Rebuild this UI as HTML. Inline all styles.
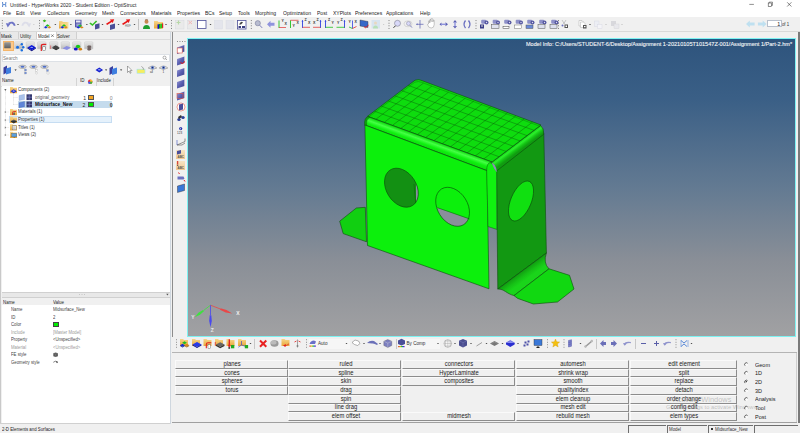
<!DOCTYPE html>
<html><head><meta charset="utf-8">
<style>
*{margin:0;padding:0;box-sizing:border-box}
html,body{width:800px;height:433px;overflow:hidden;background:#f0f0f0;font-family:"Liberation Sans",sans-serif;color:#222;position:relative}
.a{position:absolute}
.t{position:absolute;white-space:pre;line-height:1}
svg{position:absolute;left:0;top:0}
</style></head><body>
<div class="a" style="left:0px;top:0px;width:800px;height:17px;background:#ffffff;"></div>
<div class="a" style="left:0px;top:17px;width:800px;height:14px;background:#f0f0f0;"></div>
<div class="a" style="left:0px;top:31px;width:800px;height:1px;background:#d9d9d9;"></div>
<div class="t" style="left:10px;top:2.67px;font-size:5.0px;color:#1e1e1e;transform-origin:0 0;">Untitled - HyperWorks 2020 - Student Edition - OptiStruct</div>
<div class="t" style="left:2.8px;top:10.79px;font-size:5.8px;color:#1a1a1a;transform:scaleX(0.87);transform-origin:0 0;">File</div>
<div class="t" style="left:16px;top:10.79px;font-size:5.8px;color:#1a1a1a;transform:scaleX(0.87);transform-origin:0 0;">Edit</div>
<div class="t" style="left:30px;top:10.79px;font-size:5.8px;color:#1a1a1a;transform:scaleX(0.87);transform-origin:0 0;">View</div>
<div class="t" style="left:46.8px;top:10.79px;font-size:5.8px;color:#1a1a1a;transform:scaleX(0.87);transform-origin:0 0;">Collectors</div>
<div class="t" style="left:74.5px;top:10.79px;font-size:5.8px;color:#1a1a1a;transform:scaleX(0.87);transform-origin:0 0;">Geometry</div>
<div class="t" style="left:102px;top:10.79px;font-size:5.8px;color:#1a1a1a;transform:scaleX(0.87);transform-origin:0 0;">Mesh</div>
<div class="t" style="left:120px;top:10.79px;font-size:5.8px;color:#1a1a1a;transform:scaleX(0.87);transform-origin:0 0;">Connectors</div>
<div class="t" style="left:151px;top:10.79px;font-size:5.8px;color:#1a1a1a;transform:scaleX(0.87);transform-origin:0 0;">Materials</div>
<div class="t" style="left:177px;top:10.79px;font-size:5.8px;color:#1a1a1a;transform:scaleX(0.87);transform-origin:0 0;">Properties</div>
<div class="t" style="left:205px;top:10.79px;font-size:5.8px;color:#1a1a1a;transform:scaleX(0.87);transform-origin:0 0;">BCs</div>
<div class="t" style="left:219px;top:10.79px;font-size:5.8px;color:#1a1a1a;transform:scaleX(0.87);transform-origin:0 0;">Setup</div>
<div class="t" style="left:237.5px;top:10.79px;font-size:5.8px;color:#1a1a1a;transform:scaleX(0.87);transform-origin:0 0;">Tools</div>
<div class="t" style="left:254.5px;top:10.79px;font-size:5.8px;color:#1a1a1a;transform:scaleX(0.87);transform-origin:0 0;">Morphing</div>
<div class="t" style="left:282.5px;top:10.79px;font-size:5.8px;color:#1a1a1a;transform:scaleX(0.87);transform-origin:0 0;">Optimization</div>
<div class="t" style="left:317px;top:10.79px;font-size:5.8px;color:#1a1a1a;transform:scaleX(0.87);transform-origin:0 0;">Post</div>
<div class="t" style="left:332.5px;top:10.79px;font-size:5.8px;color:#1a1a1a;transform:scaleX(0.87);transform-origin:0 0;">XYPlots</div>
<div class="t" style="left:355px;top:10.79px;font-size:5.8px;color:#1a1a1a;transform:scaleX(0.87);transform-origin:0 0;">Preferences</div>
<div class="t" style="left:386px;top:10.79px;font-size:5.8px;color:#1a1a1a;transform:scaleX(0.87);transform-origin:0 0;">Applications</div>
<div class="t" style="left:419.5px;top:10.79px;font-size:5.8px;color:#1a1a1a;transform:scaleX(0.87);transform-origin:0 0;">Help</div>
<div class="a" style="left:0px;top:32px;width:170px;height:392px;background:#f0f0f0;"></div>
<div class="a" style="left:0px;top:32px;width:1px;height:392px;background:#c9c9c9;"></div>
<div class="a" style="left:1px;top:32px;width:17.5px;height:7px;background:#e9e9e9;border-right:1px solid #d0d0d0"></div>
<div class="a" style="left:18.5px;top:32px;width:18.5px;height:7px;background:#e9e9e9;border-right:1px solid #d0d0d0"></div>
<div class="a" style="left:37px;top:32px;width:19.5px;height:7.5px;background:#ffffff;border-right:1px solid #d0d0d0"></div>
<div class="a" style="left:56.5px;top:32px;width:20px;height:7px;background:#e9e9e9;border-right:1px solid #d0d0d0"></div>
<div class="a" style="left:1px;top:39px;width:169px;height:1px;background:#dcdcdc;"></div>
<div class="t" style="left:1px;top:33.71px;font-size:5.3px;color:#1a1a1a;transform:scaleX(0.85);transform-origin:0 0;">Mask</div>
<div class="t" style="left:20px;top:33.71px;font-size:5.3px;color:#1a1a1a;transform:scaleX(0.85);transform-origin:0 0;">Utility</div>
<div class="t" style="left:37.6px;top:33.71px;font-size:5.3px;color:#1a1a1a;transform:scaleX(0.8);transform-origin:0 0;">Model</div>
<div class="t" style="left:57px;top:33.71px;font-size:5.3px;color:#1a1a1a;transform:scaleX(0.85);transform-origin:0 0;">Solver</div>
<div class="a" style="left:1.5px;top:54px;width:168.5px;height:7.5px;background:#ffffff;border:0.7px solid #dde1e6"></div>
<div class="t" style="left:3px;top:55.59px;font-size:5.8px;color:#7a7a7a;transform:scaleX(0.8);transform-origin:0 0;">Search</div>
<div class="a" style="left:1px;top:78px;width:169px;height:7.5px;background:#f0f0f0;"></div>
<div class="a" style="left:1px;top:85.5px;width:169px;height:0.6px;background:#dadada;"></div>
<div class="a" style="left:76px;top:78px;width:0.6px;height:7.5px;background:#d4d4d4;"></div>
<div class="a" style="left:95.6px;top:78px;width:0.6px;height:7.5px;background:#d4d4d4;"></div>
<div class="a" style="left:113px;top:78px;width:0.6px;height:7.5px;background:#d4d4d4;"></div>
<div class="t" style="left:2.3px;top:79.45px;font-size:4.9px;color:#222;transform:scaleX(0.9);transform-origin:0 0;">Name</div>
<div class="t" style="left:80.3px;top:79.45px;font-size:4.9px;color:#222;transform:scaleX(0.9);transform-origin:0 0;">ID</div>
<div class="t" style="left:97px;top:79.45px;font-size:4.9px;color:#222;transform:scaleX(0.88);transform-origin:0 0;">Include</div>
<div class="a" style="left:1.5px;top:86px;width:168.5px;height:206px;background:#ffffff;"></div>
<div class="a" style="left:17.7px;top:101px;width:94.3px;height:7px;background:#c4dbed;"></div>
<div class="a" style="left:9.3px;top:116.2px;width:102.7px;height:7px;background:#e5f1fb;border:0.5px solid #c6ddf2"></div>
<div class="t" style="left:18.3px;top:88.25px;font-size:4.9px;color:#333;transform:scaleX(0.89);transform-origin:0 0;">Components (2)</div>
<div class="t" style="left:34.8px;top:96.34px;font-size:4.8px;color:#555;transform:scaleX(0.9);transform-origin:0 0;">original_geometry</div>
<div class="t" style="left:83.2px;top:96.08px;font-size:5.1px;color:#333;transform-origin:0 0;">1</div>
<div class="a" style="left:88.3px;top:94.5px;width:5.6px;height:5.6px;background:#f5a623;border:0.3px solid #555"></div>
<div class="t" style="left:109.8px;top:96.08px;font-size:5.1px;color:#888;transform-origin:0 0;">0</div>
<div class="t" style="left:35px;top:103.45px;font-size:4.9px;color:#111;transform:scaleX(0.97);transform-origin:0 0;font-weight:bold">Midsurface_New</div>
<div class="t" style="left:82.6px;top:103.28px;font-size:5.1px;color:#222;transform-origin:0 0;">2</div>
<div class="a" style="left:88.3px;top:101.5px;width:5.6px;height:5.6px;background:#00ee00;border:0.3px solid #555"></div>
<div class="t" style="left:109.8px;top:103.28px;font-size:5.1px;color:#333;transform-origin:0 0;font-weight:bold">0</div>
<div class="t" style="left:18.3px;top:110.35px;font-size:4.9px;color:#333;transform:scaleX(0.89);transform-origin:0 0;">Materials (1)</div>
<div class="t" style="left:18.3px;top:118.15px;font-size:4.9px;color:#333;transform:scaleX(0.89);transform-origin:0 0;">Properties (1)</div>
<div class="t" style="left:18.3px;top:125.75px;font-size:4.9px;color:#333;transform:scaleX(0.89);transform-origin:0 0;">Titles (1)</div>
<div class="t" style="left:18.3px;top:133.35px;font-size:4.9px;color:#333;transform:scaleX(0.89);transform-origin:0 0;">Views (2)</div>
<div class="a" style="left:1.5px;top:292px;width:168.5px;height:5.5px;background:#e8e8e8;border-top:0.5px solid #d0d0d0;border-bottom:0.5px solid #d0d0d0"></div>
<div class="a" style="left:1.5px;top:297.5px;width:168.5px;height:7.5px;background:#f0f0f0;"></div>
<div class="t" style="left:2.6px;top:300.85px;font-size:4.9px;color:#222;transform:scaleX(0.9);transform-origin:0 0;">Name</div>
<div class="t" style="left:52.8px;top:300.85px;font-size:4.9px;color:#222;transform:scaleX(0.9);transform-origin:0 0;">Value</div>
<div class="a" style="left:1.5px;top:305px;width:168.5px;height:118px;background:#ffffff;"></div>
<div class="t" style="left:10.6px;top:308.14px;font-size:4.8px;color:#444;transform:scaleX(0.89);transform-origin:0 0;">Name</div>
<div class="t" style="left:52.8px;top:308.14px;font-size:4.8px;color:#444;transform:scaleX(0.89);transform-origin:0 0;">Midsurface_New</div>
<div class="t" style="left:10.6px;top:315.69px;font-size:4.8px;color:#444;transform:scaleX(0.89);transform-origin:0 0;">ID</div>
<div class="t" style="left:52.8px;top:315.69px;font-size:4.8px;color:#444;transform:scaleX(0.89);transform-origin:0 0;">2</div>
<div class="t" style="left:10.6px;top:323.24px;font-size:4.8px;color:#444;transform:scaleX(0.89);transform-origin:0 0;">Color</div>
<div class="t" style="left:10.6px;top:330.79px;font-size:4.8px;color:#9a9a9a;transform:scaleX(0.89);transform-origin:0 0;">Include</div>
<div class="t" style="left:52.8px;top:330.79px;font-size:4.8px;color:#9a9a9a;transform:scaleX(0.89);transform-origin:0 0;">[Master Model]</div>
<div class="t" style="left:10.6px;top:338.34px;font-size:4.8px;color:#444;transform:scaleX(0.89);transform-origin:0 0;">Property</div>
<div class="t" style="left:52.8px;top:338.34px;font-size:4.8px;color:#444;transform:scaleX(0.89);transform-origin:0 0;">&lt;Unspecified&gt;</div>
<div class="t" style="left:10.6px;top:345.89px;font-size:4.8px;color:#9a9a9a;transform:scaleX(0.89);transform-origin:0 0;">Material</div>
<div class="t" style="left:52.8px;top:345.89px;font-size:4.8px;color:#9a9a9a;transform:scaleX(0.89);transform-origin:0 0;">&lt;Unspecified&gt;</div>
<div class="t" style="left:10.6px;top:353.44px;font-size:4.8px;color:#444;transform:scaleX(0.89);transform-origin:0 0;">FE style</div>
<div class="t" style="left:10.6px;top:360.99px;font-size:4.8px;color:#444;transform:scaleX(0.89);transform-origin:0 0;">Geometry style</div>
<div class="a" style="left:53px;top:321.5px;width:5.5px;height:5.5px;background:#00ee00;border:0.3px solid #444"></div>
<div class="a" style="left:0px;top:423px;width:171px;height:1px;background:#d0d0d0;"></div>
<div class="t" style="left:2px;top:427.74px;font-size:4.8px;color:#222;transform:scaleX(0.9);transform-origin:0 0;">2-D Elements and Surfaces</div>
<div class="a" style="left:169.9px;top:32px;width:1.4px;height:392px;background:#cfd7df;"></div>
<div class="a" style="left:171.9px;top:32px;width:1.3px;height:393px;background:#8c8c8c;"></div>
<div class="a" style="left:187px;top:38px;width:609px;height:299px;background:linear-gradient(#2e547d 0%,#3a5f86 20%,#637a92 50%,#8a8f97 75%,#a1a1a3 100%);border:1px solid #7ef2f2"></div>
<div class="a" style="left:188px;top:39px;width:607px;height:0.8px;background:#1f5886;"></div>
<div class="t" style="left:526px;top:42.19px;font-size:5.56px;color:#f4f6f8;transform-origin:0 0;-webkit-text-stroke:0.12px #e8ecf0">Model Info: C:/Users/STUDENT-6/Desktop/Assignment 1-20210105T101547Z-001/Assignment 1/Part-2.hm*</div>
<div class="a" style="left:798px;top:32px;width:1.6px;height:391px;background:#7a7a7a;"></div>
<div class="t" style="left:236.3px;top:311.07px;font-size:5px;color:#f4f4f4;transform-origin:0 0;font-weight:bold">X</div>
<div class="t" style="left:191.2px;top:314.57px;font-size:5px;color:#e8e8e8;transform-origin:0 0;font-weight:bold">Y</div>
<div class="t" style="left:210.8px;top:327.97px;font-size:5px;color:#e8e8e8;transform-origin:0 0;font-weight:bold">Z</div>
<div class="a" style="left:172.2px;top:337px;width:625px;height:15px;background:#f0f0f0;"></div>
<div class="a" style="left:172.2px;top:351.8px;width:625px;height:0.8px;background:#b4b4b4;"></div>
<div class="a" style="left:172.2px;top:352.7px;width:625px;height:0.6px;background:#fbfbfb;"></div>
<div class="a" style="left:172.2px;top:353px;width:625px;height:70px;background:#f0f0f0;"></div>
<div class="a" style="left:795.8px;top:353px;width:0.8px;height:69px;background:#cfcfcf;"></div>
<div class="a" style="left:172.2px;top:422px;width:625px;height:0.8px;background:#a0a0a0;"></div>
<div class="a" style="left:172.2px;top:423px;width:626px;height:10px;background:#f0f0f0;"></div>
<div class="a" style="left:174.5px;top:360.0px;width:113px;height:8.72px;background:#f0f0f0;border-top:0.6px solid #fafafa;border-left:0.6px solid #fafafa;border-right:1px solid #8c8c8c;border-bottom:1px solid #8c8c8c"></div>
<div class="t" style="left:131.8px;width:200px;text-align:center;top:360.88px;font-size:6.4px;color:#1a1a1a;transform:scaleX(0.91);transform-origin:50% 0;">planes</div>
<div class="a" style="left:174.5px;top:368.72px;width:113px;height:8.72px;background:#f0f0f0;border-top:0.6px solid #fafafa;border-left:0.6px solid #fafafa;border-right:1px solid #8c8c8c;border-bottom:1px solid #8c8c8c"></div>
<div class="t" style="left:131.8px;width:200px;text-align:center;top:369.60px;font-size:6.4px;color:#1a1a1a;transform:scaleX(0.91);transform-origin:50% 0;">cones</div>
<div class="a" style="left:174.5px;top:377.44px;width:113px;height:8.72px;background:#f0f0f0;border-top:0.6px solid #fafafa;border-left:0.6px solid #fafafa;border-right:1px solid #8c8c8c;border-bottom:1px solid #8c8c8c"></div>
<div class="t" style="left:131.8px;width:200px;text-align:center;top:378.32px;font-size:6.4px;color:#1a1a1a;transform:scaleX(0.91);transform-origin:50% 0;">spheres</div>
<div class="a" style="left:174.5px;top:386.16px;width:113px;height:8.72px;background:#f0f0f0;border-top:0.6px solid #fafafa;border-left:0.6px solid #fafafa;border-right:1px solid #8c8c8c;border-bottom:1px solid #8c8c8c"></div>
<div class="t" style="left:131.8px;width:200px;text-align:center;top:387.04px;font-size:6.4px;color:#1a1a1a;transform:scaleX(0.91);transform-origin:50% 0;">torus</div>
<div class="a" style="left:288.2px;top:360.0px;width:113px;height:8.72px;background:#f0f0f0;border-top:0.6px solid #fafafa;border-left:0.6px solid #fafafa;border-right:1px solid #8c8c8c;border-bottom:1px solid #8c8c8c"></div>
<div class="t" style="left:245.5px;width:200px;text-align:center;top:360.88px;font-size:6.4px;color:#1a1a1a;transform:scaleX(0.91);transform-origin:50% 0;">ruled</div>
<div class="a" style="left:288.2px;top:368.72px;width:113px;height:8.72px;background:#f0f0f0;border-top:0.6px solid #fafafa;border-left:0.6px solid #fafafa;border-right:1px solid #8c8c8c;border-bottom:1px solid #8c8c8c"></div>
<div class="t" style="left:245.5px;width:200px;text-align:center;top:369.60px;font-size:6.4px;color:#1a1a1a;transform:scaleX(0.91);transform-origin:50% 0;">spline</div>
<div class="a" style="left:288.2px;top:377.44px;width:113px;height:8.72px;background:#f0f0f0;border-top:0.6px solid #fafafa;border-left:0.6px solid #fafafa;border-right:1px solid #8c8c8c;border-bottom:1px solid #8c8c8c"></div>
<div class="t" style="left:245.5px;width:200px;text-align:center;top:378.32px;font-size:6.4px;color:#1a1a1a;transform:scaleX(0.91);transform-origin:50% 0;">skin</div>
<div class="a" style="left:288.2px;top:386.16px;width:113px;height:8.72px;background:#f0f0f0;border-top:0.6px solid #fafafa;border-left:0.6px solid #fafafa;border-right:1px solid #8c8c8c;border-bottom:1px solid #8c8c8c"></div>
<div class="t" style="left:245.5px;width:200px;text-align:center;top:387.04px;font-size:6.4px;color:#1a1a1a;transform:scaleX(0.91);transform-origin:50% 0;">drag</div>
<div class="a" style="left:288.2px;top:394.88px;width:113px;height:8.72px;background:#f0f0f0;border-top:0.6px solid #fafafa;border-left:0.6px solid #fafafa;border-right:1px solid #8c8c8c;border-bottom:1px solid #8c8c8c"></div>
<div class="t" style="left:245.5px;width:200px;text-align:center;top:395.76px;font-size:6.4px;color:#1a1a1a;transform:scaleX(0.91);transform-origin:50% 0;">spin</div>
<div class="a" style="left:288.2px;top:403.6px;width:113px;height:8.72px;background:#f0f0f0;border-top:0.6px solid #fafafa;border-left:0.6px solid #fafafa;border-right:1px solid #8c8c8c;border-bottom:1px solid #8c8c8c"></div>
<div class="t" style="left:245.5px;width:200px;text-align:center;top:404.48px;font-size:6.4px;color:#1a1a1a;transform:scaleX(0.91);transform-origin:50% 0;">line drag</div>
<div class="a" style="left:288.2px;top:412.32px;width:113px;height:8.72px;background:#f0f0f0;border-top:0.6px solid #fafafa;border-left:0.6px solid #fafafa;border-right:1px solid #8c8c8c;border-bottom:1px solid #8c8c8c"></div>
<div class="t" style="left:245.5px;width:200px;text-align:center;top:413.20px;font-size:6.4px;color:#1a1a1a;transform:scaleX(0.91);transform-origin:50% 0;">elem offset</div>
<div class="a" style="left:402px;top:360.0px;width:113px;height:8.72px;background:#f0f0f0;border-top:0.6px solid #fafafa;border-left:0.6px solid #fafafa;border-right:1px solid #8c8c8c;border-bottom:1px solid #8c8c8c"></div>
<div class="t" style="left:359.3px;width:200px;text-align:center;top:360.88px;font-size:6.4px;color:#1a1a1a;transform:scaleX(0.91);transform-origin:50% 0;">connectors</div>
<div class="a" style="left:402px;top:368.72px;width:113px;height:8.72px;background:#f0f0f0;border-top:0.6px solid #fafafa;border-left:0.6px solid #fafafa;border-right:1px solid #8c8c8c;border-bottom:1px solid #8c8c8c"></div>
<div class="t" style="left:359.3px;width:200px;text-align:center;top:369.60px;font-size:6.4px;color:#1a1a1a;transform:scaleX(0.91);transform-origin:50% 0;">HyperLaminate</div>
<div class="a" style="left:402px;top:377.44px;width:113px;height:8.72px;background:#f0f0f0;border-top:0.6px solid #fafafa;border-left:0.6px solid #fafafa;border-right:1px solid #8c8c8c;border-bottom:1px solid #8c8c8c"></div>
<div class="t" style="left:359.3px;width:200px;text-align:center;top:378.32px;font-size:6.4px;color:#1a1a1a;transform:scaleX(0.91);transform-origin:50% 0;">composites</div>
<div class="a" style="left:402px;top:412.32px;width:113px;height:8.72px;background:#f0f0f0;border-top:0.6px solid #fafafa;border-left:0.6px solid #fafafa;border-right:1px solid #8c8c8c;border-bottom:1px solid #8c8c8c"></div>
<div class="t" style="left:359.3px;width:200px;text-align:center;top:413.20px;font-size:6.4px;color:#1a1a1a;transform:scaleX(0.91);transform-origin:50% 0;">midmesh</div>
<div class="a" style="left:515.5px;top:360.0px;width:113px;height:8.72px;background:#f0f0f0;border-top:0.6px solid #fafafa;border-left:0.6px solid #fafafa;border-right:1px solid #8c8c8c;border-bottom:1px solid #8c8c8c"></div>
<div class="t" style="left:472.79999999999995px;width:200px;text-align:center;top:360.88px;font-size:6.4px;color:#1a1a1a;transform:scaleX(0.91);transform-origin:50% 0;">automesh</div>
<div class="a" style="left:515.5px;top:368.72px;width:113px;height:8.72px;background:#f0f0f0;border-top:0.6px solid #fafafa;border-left:0.6px solid #fafafa;border-right:1px solid #8c8c8c;border-bottom:1px solid #8c8c8c"></div>
<div class="t" style="left:472.79999999999995px;width:200px;text-align:center;top:369.60px;font-size:6.4px;color:#1a1a1a;transform:scaleX(0.91);transform-origin:50% 0;">shrink wrap</div>
<div class="a" style="left:515.5px;top:377.44px;width:113px;height:8.72px;background:#f0f0f0;border-top:0.6px solid #fafafa;border-left:0.6px solid #fafafa;border-right:1px solid #8c8c8c;border-bottom:1px solid #8c8c8c"></div>
<div class="t" style="left:472.79999999999995px;width:200px;text-align:center;top:378.32px;font-size:6.4px;color:#1a1a1a;transform:scaleX(0.91);transform-origin:50% 0;">smooth</div>
<div class="a" style="left:515.5px;top:386.16px;width:113px;height:8.72px;background:#f0f0f0;border-top:0.6px solid #fafafa;border-left:0.6px solid #fafafa;border-right:1px solid #8c8c8c;border-bottom:1px solid #8c8c8c"></div>
<div class="t" style="left:472.79999999999995px;width:200px;text-align:center;top:387.04px;font-size:6.4px;color:#1a1a1a;transform:scaleX(0.91);transform-origin:50% 0;">qualityindex</div>
<div class="a" style="left:515.5px;top:394.88px;width:113px;height:8.72px;background:#f0f0f0;border-top:0.6px solid #fafafa;border-left:0.6px solid #fafafa;border-right:1px solid #8c8c8c;border-bottom:1px solid #8c8c8c"></div>
<div class="t" style="left:472.79999999999995px;width:200px;text-align:center;top:395.76px;font-size:6.4px;color:#1a1a1a;transform:scaleX(0.91);transform-origin:50% 0;">elem cleanup</div>
<div class="a" style="left:515.5px;top:403.6px;width:113px;height:8.72px;background:#f0f0f0;border-top:0.6px solid #fafafa;border-left:0.6px solid #fafafa;border-right:1px solid #8c8c8c;border-bottom:1px solid #8c8c8c"></div>
<div class="t" style="left:472.79999999999995px;width:200px;text-align:center;top:404.48px;font-size:6.4px;color:#1a1a1a;transform:scaleX(0.91);transform-origin:50% 0;">mesh edit</div>
<div class="a" style="left:515.5px;top:412.32px;width:113px;height:8.72px;background:#f0f0f0;border-top:0.6px solid #fafafa;border-left:0.6px solid #fafafa;border-right:1px solid #8c8c8c;border-bottom:1px solid #8c8c8c"></div>
<div class="t" style="left:472.79999999999995px;width:200px;text-align:center;top:413.20px;font-size:6.4px;color:#1a1a1a;transform:scaleX(0.91);transform-origin:50% 0;">rebuild mesh</div>
<div class="a" style="left:629.5px;top:360.0px;width:107px;height:8.72px;background:#f0f0f0;border-top:0.6px solid #fafafa;border-left:0.6px solid #fafafa;border-right:1px solid #8c8c8c;border-bottom:1px solid #8c8c8c"></div>
<div class="t" style="left:583.8px;width:200px;text-align:center;top:360.88px;font-size:6.4px;color:#1a1a1a;transform:scaleX(0.91);transform-origin:50% 0;">edit element</div>
<div class="a" style="left:629.5px;top:368.72px;width:107px;height:8.72px;background:#f0f0f0;border-top:0.6px solid #fafafa;border-left:0.6px solid #fafafa;border-right:1px solid #8c8c8c;border-bottom:1px solid #8c8c8c"></div>
<div class="t" style="left:583.8px;width:200px;text-align:center;top:369.60px;font-size:6.4px;color:#1a1a1a;transform:scaleX(0.91);transform-origin:50% 0;">split</div>
<div class="a" style="left:629.5px;top:377.44px;width:107px;height:8.72px;background:#f0f0f0;border-top:0.6px solid #fafafa;border-left:0.6px solid #fafafa;border-right:1px solid #8c8c8c;border-bottom:1px solid #8c8c8c"></div>
<div class="t" style="left:583.8px;width:200px;text-align:center;top:378.32px;font-size:6.4px;color:#1a1a1a;transform:scaleX(0.91);transform-origin:50% 0;">replace</div>
<div class="a" style="left:629.5px;top:386.16px;width:107px;height:8.72px;background:#f0f0f0;border-top:0.6px solid #fafafa;border-left:0.6px solid #fafafa;border-right:1px solid #8c8c8c;border-bottom:1px solid #8c8c8c"></div>
<div class="t" style="left:583.8px;width:200px;text-align:center;top:387.04px;font-size:6.4px;color:#1a1a1a;transform:scaleX(0.91);transform-origin:50% 0;">detach</div>
<div class="a" style="left:629.5px;top:394.88px;width:107px;height:8.72px;background:#f0f0f0;border-top:0.6px solid #fafafa;border-left:0.6px solid #fafafa;border-right:1px solid #8c8c8c;border-bottom:1px solid #8c8c8c"></div>
<div class="t" style="left:583.8px;width:200px;text-align:center;top:395.76px;font-size:6.4px;color:#1a1a1a;transform:scaleX(0.91);transform-origin:50% 0;">order change</div>
<div class="a" style="left:629.5px;top:403.6px;width:107px;height:8.72px;background:#f0f0f0;border-top:0.6px solid #fafafa;border-left:0.6px solid #fafafa;border-right:1px solid #8c8c8c;border-bottom:1px solid #8c8c8c"></div>
<div class="t" style="left:583.8px;width:200px;text-align:center;top:404.48px;font-size:6.4px;color:#1a1a1a;transform:scaleX(0.91);transform-origin:50% 0;">config edit</div>
<div class="a" style="left:629.5px;top:412.32px;width:107px;height:8.72px;background:#f0f0f0;border-top:0.6px solid #fafafa;border-left:0.6px solid #fafafa;border-right:1px solid #8c8c8c;border-bottom:1px solid #8c8c8c"></div>
<div class="t" style="left:583.8px;width:200px;text-align:center;top:413.20px;font-size:6.4px;color:#1a1a1a;transform:scaleX(0.91);transform-origin:50% 0;">elem types</div>
<div class="t" style="left:754.7px;top:361.52px;font-size:6.0px;color:#1a1a1a;transform:scaleX(0.92);transform-origin:0 0;">Geom</div>
<div class="t" style="left:754.7px;top:370.24px;font-size:6.0px;color:#1a1a1a;transform:scaleX(0.92);transform-origin:0 0;">1D</div>
<div class="t" style="left:754.7px;top:378.96px;font-size:6.0px;color:#1a1a1a;transform:scaleX(0.92);transform-origin:0 0;">2D</div>
<div class="t" style="left:754.7px;top:387.68px;font-size:6.0px;color:#1a1a1a;transform:scaleX(0.92);transform-origin:0 0;">3D</div>
<div class="t" style="left:754.7px;top:396.40px;font-size:6.0px;color:#1a1a1a;transform:scaleX(0.92);transform-origin:0 0;">Analysis</div>
<div class="t" style="left:754.7px;top:405.12px;font-size:6.0px;color:#1a1a1a;transform:scaleX(0.92);transform-origin:0 0;">Tool</div>
<div class="t" style="left:754.7px;top:413.84px;font-size:6.0px;color:#1a1a1a;transform:scaleX(0.92);transform-origin:0 0;">Post</div>
<div class="t" style="left:673px;top:395.64px;font-size:7.4px;color:rgba(125,125,125,0.42);transform-origin:0 0;">Activate Windows</div>
<div class="t" style="left:666px;top:405.36px;font-size:5.83px;color:rgba(125,125,125,0.42);transform-origin:0 0;">Go to Settings to activate Windows.</div>
<div class="a" style="left:628px;top:425px;width:38px;height:8px;background:#f0f0f0;border-left:1px solid #6e6e6e;border-top:1px solid #6e6e6e"></div>
<div class="a" style="left:667px;top:425px;width:40px;height:8px;background:#f0f0f0;border-left:1px solid #6e6e6e;border-top:1px solid #6e6e6e"></div>
<div class="a" style="left:708px;top:425px;width:45px;height:8px;background:#f0f0f0;border-left:1px solid #6e6e6e;border-top:1px solid #6e6e6e"></div>
<div class="a" style="left:754px;top:425px;width:44px;height:8px;background:#f0f0f0;border-left:1px solid #6e6e6e;border-top:1px solid #6e6e6e"></div>
<div class="t" style="left:669px;top:427.65px;font-size:4.9px;color:#333;transform:scaleX(0.9);transform-origin:0 0;">Model</div>
<div class="a" style="left:710.5px;top:427.8px;width:2.6px;height:2.6px;background:#00cc00;border:0.3px solid #333"></div>
<div class="t" style="left:715px;top:427.65px;font-size:4.9px;color:#333;transform:scaleX(0.9);transform-origin:0 0;">Midsurface_New</div>
<div class="a" style="left:2.5px;top:40.8px;width:11px;height:10.6px;background:#fcc98a;border:0.5px solid #f4b56a"></div>
<div class="t" style="left:150px;top:71.26px;font-size:3px;color:#333;transform-origin:0 0;">all</div>
<div class="t" style="left:162.5px;top:71.26px;font-size:3px;color:#333;transform-origin:0 0;">1</div>
<div class="t" style="left:125px;top:26.40px;font-size:2.6px;color:#666;transform-origin:0 0;">HWF</div>
<div class="a" style="left:138.3px;top:19px;width:0.6px;height:11px;background:#c4c4c4;"></div>
<div class="t" style="left:281.5px;top:20.45px;font-size:3.6px;color:#333;transform-origin:0 0;font-weight:bold">Y</div>
<div class="t" style="left:284.5px;top:23.45px;font-size:3.6px;color:#333;transform-origin:0 0;font-weight:bold">X</div>
<div class="t" style="left:296.5px;top:21.95px;font-size:3.6px;color:#333;transform-origin:0 0;font-weight:bold">X</div>
<div class="t" style="left:292.5px;top:25.45px;font-size:3.6px;color:#333;transform-origin:0 0;font-weight:bold">Y</div>
<div class="t" style="left:304.5px;top:18.95px;font-size:3.6px;color:#333;transform-origin:0 0;font-weight:bold">Z</div>
<div class="t" style="left:308px;top:22.45px;font-size:3.6px;color:#333;transform-origin:0 0;font-weight:bold">X</div>
<div class="t" style="left:313px;top:22.45px;font-size:3.6px;color:#333;transform-origin:0 0;font-weight:bold">X</div>
<div class="t" style="left:316.5px;top:18.95px;font-size:3.6px;color:#333;transform-origin:0 0;font-weight:bold">Z</div>
<div class="t" style="left:328px;top:18.95px;font-size:3.6px;color:#333;transform-origin:0 0;font-weight:bold">Z</div>
<div class="t" style="left:331.5px;top:22.45px;font-size:3.6px;color:#333;transform-origin:0 0;font-weight:bold">Y</div>
<div class="t" style="left:337px;top:22.45px;font-size:3.6px;color:#333;transform-origin:0 0;font-weight:bold">Y</div>
<div class="t" style="left:340.5px;top:18.95px;font-size:3.6px;color:#333;transform-origin:0 0;font-weight:bold">Z</div>
<div class="t" style="left:348.5px;top:20.95px;font-size:3.6px;color:#333;transform-origin:0 0;font-weight:bold">Y</div>
<div class="t" style="left:354.5px;top:20.95px;font-size:3.6px;color:#333;transform-origin:0 0;font-weight:bold">X</div>
<div class="a" style="left:767.4px;top:20.3px;width:14.2px;height:7.1px;background:#ffffff;border:0.5px solid #b8c0cc"></div>
<div class="t" style="left:580.2px;width:200px;text-align:right;top:22.03px;font-size:5.4px;color:#222;transform-origin:100% 0;">1</div>
<div class="t" style="left:782.2px;top:22.37px;font-size:5.0px;color:#333;transform:scaleX(0.85);transform-origin:0 0;">of 1</div>
<div class="a" style="left:254.3px;top:339px;width:0.6px;height:10px;background:#c8c8c8;"></div>
<div class="a" style="left:308.5px;top:338.5px;width:41px;height:10px;background:#f6f6f6;"></div>
<div class="t" style="left:318px;top:341.81px;font-size:4.6px;color:#333;transform-origin:0 0;">Auto</div>
<div class="a" style="left:395.8px;top:339px;width:0.6px;height:10px;background:#c8c8c8;"></div>
<div class="a" style="left:397.5px;top:338.5px;width:42px;height:10px;background:#f6f6f6;"></div>
<div class="t" style="left:406.5px;top:341.81px;font-size:4.6px;color:#333;transform-origin:0 0;">By Comp</div>
<div class="a" style="left:596px;top:339px;width:0.6px;height:10px;background:#c8c8c8;"></div>
<div class="a" style="left:635.3px;top:339px;width:0.6px;height:10px;background:#c8c8c8;"></div>
<div class="a" style="left:641px;top:342.8px;width:5px;height:1.2px;background:#5a5fa8;"></div>
<div class="a" style="left:654px;top:342.8px;width:5px;height:1.2px;background:#5a5fa8;"></div>
<div class="a" style="left:655.9px;top:340.9px;width:1.2px;height:5px;background:#5a5fa8;"></div>
<div class="t" style="left:176.8px;top:132.32px;font-size:3.4px;color:#333;transform:scaleX(0.9);transform-origin:0 0;">123</div>
<div class="a" style="left:175.8px;top:150.3px;width:9.5px;height:9.2px;background:linear-gradient(#f6e4c4,#f0c890);"></div>
<div class="t" style="left:177.5px;top:156.26px;font-size:3px;color:#555;transform-origin:0 0;font-weight:bold">ABC</div>
<div class="a" style="left:175.8px;top:160.5px;width:9.5px;height:9.5px;background:linear-gradient(#f6e4c4,#f0c890);"></div>
<div class="t" style="left:177.5px;top:166.76px;font-size:3px;color:#555;transform-origin:0 0;font-weight:bold">ABC</div>
<svg width="800" height="433" viewBox="0 0 800 433"><defs>
<linearGradient id="bendF" gradientUnits="userSpaceOnUse" x1="430" y1="139.3" x2="426.9" y2="147.9"><stop offset="0" stop-color="#0cd80c"/><stop offset="0.35" stop-color="#44ff44"/><stop offset="0.7" stop-color="#10f010"/><stop offset="1" stop-color="#0ce00c"/></linearGradient>
<clipPath id="h1"><ellipse cx="401.4" cy="187.7" rx="21" ry="15" transform="rotate(58 401.4 187.7)"/></clipPath>
<clipPath id="h2"><ellipse cx="452.6" cy="206.8" rx="21" ry="15" transform="rotate(58 452.6 206.8)"/></clipPath>
<linearGradient id="bendR" gradientUnits="userSpaceOnUse" x1="516.5" y1="143.5" x2="521" y2="149.5"><stop offset="0" stop-color="#10d410"/><stop offset="0.3" stop-color="#2cee2c"/><stop offset="0.65" stop-color="#14c414"/><stop offset="1" stop-color="#109c10"/></linearGradient><linearGradient id="bendT" gradientUnits="userSpaceOnUse" x1="522" y1="271" x2="527.5" y2="278.5"><stop offset="0" stop-color="#119c11"/><stop offset="0.55" stop-color="#16c016"/><stop offset="1" stop-color="#1ad41a"/></linearGradient></defs>
<g stroke="#0b4d0b" stroke-width="0.6" stroke-linejoin="round">
<path d="M356.3 208L365.3 207.3L366.5 241.8L343.2 233.6L339.7 221.2Z" fill="#11cf11"/>
<path d="M496.6 170L543.8 133.5L546.4 253L497.8 289Z" fill="#129812"/>
<ellipse cx="521" cy="201" rx="10.2" ry="21.3" transform="rotate(23 521 201)" fill="#10e010"/>
<path d="M491.6 162.4L540.5 125.5Q544 128 543.8 134.2L496.6 171Q495 165 491.6 162.4Z" fill="url(#bendR)"/>
<path d="M497.8 289L546.4 253Q543 263 549 268.8L514 295.6C506 293.5 504.5 289 497.8 289Z" fill="url(#bendT)"/>
<path d="M514 295.6L549 268.8L569.5 275.3L574 289L557.5 302L533.4 304L517.7 298.4Z" fill="#11d811"/>
<path d="M415 80.2Q419 78.8 422 80.6L541 125L492 162L367.5 116.3Z" fill="#0edc0e"/><path d="M367.3 118L414.8 82.2Q418.5 80.8 421.5 82.3L540 126.3" fill="none" stroke-width="0.4" stroke="#0a700a"/>
<path fill="none" stroke-width="0.42" stroke="#0a5a0a" d="M423.4 83.2L375.8 119.3M431.8 86.2L384.1 122.4M440.2 89.2L392.4 125.4M448.6 92.1L400.7 128.5M457.0 95.1L409.0 131.5M465.4 98.1L417.3 134.6M473.8 101.1L425.6 137.6M482.2 104.1L433.9 140.7M490.6 107.1L442.2 143.7M499.0 110.1L450.5 146.8M507.4 113.1L458.8 149.8M515.8 116.0L467.1 152.9M524.2 119.0L475.4 155.9M532.6 122.0L483.7 159.0M408.2 85.4L534.0 130.3M401.4 90.5L527.0 135.6M394.6 95.7L520.0 140.9M387.9 100.8L513.0 146.1M381.1 106.0L506.0 151.4M374.3 111.1L499.0 156.7"/>
<path d="M368 116.5L492 162Q487.5 164 487 170.7L365.8 125.3Q364.5 119 368 116.5Z" fill="url(#bendF)"/><path d="M368.2 116.4Q363.8 118 364.6 125.2L366.4 125.6Q365.6 120.5 369.5 117Z" fill="#0e9e0e" stroke-width="0.4"/>
<path d="M364.9 125L487 170.7L489 288.8L367.5 245.5Z" fill="#0cf00c"/>
<g clip-path="url(#h1)" stroke="none"><rect x="370" y="160" width="60" height="60" fill="#139013"/><path d="M414 170L416 170L416 210L430 210L430 170Z" fill="#8a90a0"/></g>
<ellipse cx="401.4" cy="187.7" rx="21" ry="15" transform="rotate(58 401.4 187.7)" fill="none"/>
<path d="M414 184L415.7 203.3" fill="none" stroke-width="0.4"/>
<g clip-path="url(#h2)" stroke="none"><rect x="420" y="180" width="60" height="60" fill="#0cf00c"/><path d="M420 201.8L475 221L475 240L420 240Z" fill="#8a8f9b"/></g>
<ellipse cx="452.6" cy="206.8" rx="21" ry="15" transform="rotate(58 452.6 206.8)" fill="none"/>
<path d="M437.4 207.7L469.5 218.9" fill="none" stroke-width="0.5"/>
<path d="M486.7 170.7Q486.7 163.2 490 162.6Q494 163.5 496.6 171L496.8 229.4L488 226.6Z" fill="#10f210" stroke-width="0.45"/><path d="M491.6 162.4Q495.6 164.2 496.7 170.2L496.6 172.2Q493.6 168.5 492.4 164.6Z" fill="#8a8fb4" stroke="none"/>
</g>

<path d="M2.5 2q0.6 2.5 0 5M5.9 2q-0.6 2.5 0 5M2.8 4.6h2.8" stroke="#5c8ad0" stroke-width="1" fill="none"/>
<path d="M749.3 4.4h4.6" stroke="#333" stroke-width="0.55"/>
<rect x="768.2" y="3" width="3.4" height="3.4" fill="none" stroke="#333" stroke-width="0.55"/><path d="M769.2 3v-0.9h3.3v3.3h-0.9" fill="none" stroke="#333" stroke-width="0.5"/>
<path d="M787.2 2.3l4.2 4.2M791.4 2.3l-4.2 4.2" stroke="#333" stroke-width="0.6"/>
<path d="M51.2 34.4l2.5 2.5M53.7 34.4l-2.5 2.5" stroke="#333" stroke-width="0.55"/>
<circle cx="164.5" cy="57.6" r="1.5" fill="none" stroke="#666" stroke-width="0.5"/><path d="M165.6 58.7l1.3 1.3" stroke="#666" stroke-width="0.6"/>
<circle cx="90.2" cy="81.7" r="2.3" fill="#e33"/><path d="M90.2 81.7L90.2 79.4A2.3 2.3 0 0 1 92.5 81.7Z" fill="#fc3"/><path d="M90.2 81.7L92.5 81.7A2.3 2.3 0 0 1 90.2 84Z" fill="#3c3"/><path d="M90.2 81.7L90.2 84A2.3 2.3 0 0 1 87.9 81.7Z" fill="#36f"/>
<g stroke="#a8a8a8" stroke-width="0.4" stroke-dasharray="0.6 0.6" fill="none"><path d="M5.5 90v45M5.5 112h3.5M5.5 120h3.5M5.5 127.5h3.5M5.5 135h3.5M13.5 92v12.5M13.5 97.5h4M13.5 104.5h4"/></g>
<path d="M4.3 89.3l2.2 0l-1.1 1.4z" fill="#333"/>
<path d="M4.8 111l1.4 1.1l-1.4 1.1z" fill="#777"/>
<path d="M4.8 119l1.4 1.1l-1.4 1.1z" fill="#777"/>
<path d="M4.8 126.5l1.4 1.1l-1.4 1.1z" fill="#777"/>
<path d="M4.8 134l1.4 1.1l-1.4 1.1z" fill="#777"/>
<path d="M10 87h2.5l0.8 0.8h3.7v5.5h-7z" fill="url(#fold)"/><path d="M10.5 91.3l3.2-2l3.2 2l-3.2 2z" fill="#1f2fd0"/><ellipse cx="13.7" cy="91.1" rx="1.1" ry="0.5" fill="#cfd8ff"/>
<path d="M19 95.5l5.5-1.2v5.2l-5.5 1z" fill="#a9c2ea" stroke="#7d9ad0" stroke-width="0.3"/><rect x="26.5" y="94.3" width="5.5" height="5.8" fill="#34386e"/><path d="M26.5 97.2h5.5M29.2 94.3v5.8" stroke="#9a9ee8" stroke-width="0.45"/>
<path d="M19 102.7l5.5-1.2v5.2l-5.5 1z" fill="#5f85d8" stroke="#2d4da0" stroke-width="0.3"/><rect x="26.5" y="101.5" width="5.5" height="5.8" fill="#34386e"/><path d="M26.5 104.4h5.5M29.2 101.5v5.8" stroke="#9a9ee8" stroke-width="0.45"/>
<path d="M10 109h2.5l0.8 0.8h3.7v5.5h-7z" fill="url(#fold)"/><path d="M12.5 115v-2.5q0-1 1-1h2.5" stroke="#d22" stroke-width="0.8" fill="none"/><rect x="13.3" y="112.5" width="1.5" height="2.5" fill="#555"/>
<path d="M10 116.8h2.5l0.8 0.8h3.7v5.5h-7z" fill="url(#fold)"/><path d="M10.8 121l3-1.5l3 1.5l-3 1.6z" fill="#555"/><path d="M10.8 121v0.8l3 1.6l3-1.6v-0.8" fill="#333"/>
<path d="M10 124.3h2.5l0.8 0.8h3.7v5.5h-7z" fill="url(#fold)"/><rect x="12.3" y="125.8" width="4" height="4" fill="#eee" stroke="#666" stroke-width="0.4"/><path d="M13 127h2.5M13 128.3h2.5" stroke="#777" stroke-width="0.35"/>
<path d="M10 131.8h2.5l0.8 0.8h3.7v5.5h-7z" fill="url(#fold)"/><rect x="11.8" y="133.3" width="5" height="3.6" fill="#5aa0e0" stroke="#555" stroke-width="0.35"/><path d="M13.5 137.5h1.6" stroke="#555" stroke-width="0.5"/>
<g fill="#888"><circle cx="79.5" cy="294.7" r="0.35"/><circle cx="82" cy="294.7" r="0.35"/><circle cx="84.5" cy="294.7" r="0.35"/></g>
<path d="M166.2 293.8h2.4l-1.2 1.8z" fill="#555"/>
<path d="M53.3 353.3l2.3-0.9l2.3 0.9v2.9l-2.3 0.9l-2.3-0.9z" fill="#5a5a5a"/><path d="M53.3 353.3l2.3 0.9l2.3-0.9M55.6 354.2v2.9" stroke="#999" stroke-width="0.3" fill="none"/>
<path d="M53.3 362.3q2-2.2 4.2 0" stroke="#333" stroke-width="0.6" fill="none"/><path d="M55.8 361.3l2.2 0.5l-1 1.4z" fill="#333"/>
<path d="M210.5 305.2L220.26 308.94" stroke="#e84848" stroke-width="0.8"/>
<path d="M219.99 309.66L225.66 312.39L232.20 313.50L226.59 309.96L220.54 308.21Z" fill="#e84848"/>
<path d="M210.5 305.2L203.44 310.60" stroke="#40e040" stroke-width="0.8"/>
<path d="M202.96 309.98L198.41 312.81L194.80 317.20L199.99 314.87L203.91 311.22Z" fill="#40e040"/>
<path d="M210.5 305.2L210.50 315.14" stroke="#4848f0" stroke-width="0.8"/>
<path d="M209.72 315.14L209.20 321.11L210.50 327.30L211.80 321.11L211.28 315.14Z" fill="#4848f0"/>
<circle cx="746.3" cy="364.50" r="1.7" fill="#fafafa"/><path d="M745.1 365.70A1.7 1.7 0 0 1 747.6 363.30" fill="none" stroke="#222" stroke-width="0.7"/>
<circle cx="746.3" cy="373.22" r="1.7" fill="#fafafa"/><path d="M745.1 374.42A1.7 1.7 0 0 1 747.6 372.02" fill="none" stroke="#222" stroke-width="0.7"/>
<circle cx="746.3" cy="381.94" r="1.7" fill="#fafafa"/><path d="M745.1 383.14A1.7 1.7 0 0 1 747.6 380.74" fill="none" stroke="#222" stroke-width="0.7"/>
<circle cx="746.3" cy="381.64" r="0.7" fill="#222"/>
<circle cx="746.3" cy="390.66" r="1.7" fill="#fafafa"/><path d="M745.1 391.86A1.7 1.7 0 0 1 747.6 389.46" fill="none" stroke="#222" stroke-width="0.7"/>
<circle cx="746.3" cy="399.38" r="1.7" fill="#fafafa"/><path d="M745.1 400.58A1.7 1.7 0 0 1 747.6 398.18" fill="none" stroke="#222" stroke-width="0.7"/>
<circle cx="746.3" cy="408.10" r="1.7" fill="#fafafa"/><path d="M745.1 409.30A1.7 1.7 0 0 1 747.6 406.90" fill="none" stroke="#222" stroke-width="0.7"/>
<circle cx="746.3" cy="416.82" r="1.7" fill="#fafafa"/><path d="M745.1 418.02A1.7 1.7 0 0 1 747.6 415.62" fill="none" stroke="#222" stroke-width="0.7"/>
<defs><linearGradient id="gbox" x1="0" y1="0" x2="0" y2="1"><stop offset="0" stop-color="#ececec"/><stop offset="1" stop-color="#b9b9b9"/></linearGradient><linearGradient id="dbox" x1="0" y1="0" x2="0" y2="1"><stop offset="0" stop-color="#9a9a9a"/><stop offset="1" stop-color="#5e5e5e"/></linearGradient><linearGradient id="fold" x1="0" y1="0" x2="0" y2="1"><stop offset="0" stop-color="#f6d58a"/><stop offset="1" stop-color="#e9a83a"/></linearGradient></defs>
<rect x="4.2" y="42.3" width="6.6" height="6" rx="0.6" fill="url(#dbox)"/>
<path d="M15.5 41.8h6.5q1 0 1 1v6h-8.5v-6q0-1 1-1z" fill="url(#gbox)" stroke="#c4c4c4" stroke-width="0.4"/><path d="M16 43.5h6.5" stroke="#d8d8d8" stroke-width="0.4"/>
<path d="M27.0 41.8h6.5q1 0 1 1v6h-8.5v-6q0-1 1-1z" fill="url(#gbox)" stroke="#c4c4c4" stroke-width="0.4"/><path d="M27.5 43.5h6.5" stroke="#d8d8d8" stroke-width="0.4"/>
<path d="M38.5 41.8h6.5q1 0 1 1v6h-8.5v-6q0-1 1-1z" fill="url(#gbox)" stroke="#c4c4c4" stroke-width="0.4"/><path d="M39 43.5h6.5" stroke="#d8d8d8" stroke-width="0.4"/>
<path d="M50.5 41.8h6.5q1 0 1 1v6h-8.5v-6q0-1 1-1z" fill="url(#gbox)" stroke="#c4c4c4" stroke-width="0.4"/><path d="M51 43.5h6.5" stroke="#d8d8d8" stroke-width="0.4"/>
<path d="M62.0 41.8h6.5q1 0 1 1v6h-8.5v-6q0-1 1-1z" fill="url(#gbox)" stroke="#c4c4c4" stroke-width="0.4"/><path d="M62.5 43.5h6.5" stroke="#d8d8d8" stroke-width="0.4"/>
<path d="M73.5 41.8h6.5q1 0 1 1v6h-8.5v-6q0-1 1-1z" fill="url(#gbox)" stroke="#c4c4c4" stroke-width="0.4"/><path d="M74 43.5h6.5" stroke="#d8d8d8" stroke-width="0.4"/>
<path d="M85.5 41.8h6.5q1 0 1 1v6h-8.5v-6q0-1 1-1z" fill="url(#gbox)" stroke="#c4c4c4" stroke-width="0.4"/><path d="M86 43.5h6.5" stroke="#d8d8d8" stroke-width="0.4"/>
<path d="M17.5 47.3L21.8 44.2M17.5 47.3L23.3 47.3M17.5 47.3L21.8 50.3" stroke="#99a" stroke-width="0.4"/><g fill="#1b6fe0"><circle cx="17.5" cy="47.3" r="1.5"/><circle cx="21.8" cy="44.2" r="1.2"/><circle cx="23.3" cy="47.3" r="1.2"/><circle cx="21.8" cy="50.3" r="1.2"/></g>
<path d="M27.5 47.6l4.2-2.7l4.2 2.7l-4.2 2.7z" fill="#0b16d8"/><path d="M27.5 47.6v0.9l4.2 2.7l4.2-2.7v-0.9l-4.2 2.7z" fill="#050a80"/><ellipse cx="31.7" cy="47.4" rx="1.4" ry="0.6" fill="#8b9bf0"/>
<path d="M41.3 51v-4.8q0-1.8 2-1.8h3" stroke="#e02020" stroke-width="1.2" fill="none"/><rect x="42.8" y="46.8" width="2.4" height="3.8" fill="#fff" stroke="#555" stroke-width="0.45"/>
<path d="M52.5 47l3.2-1.8l3.6 2l-3.2 2.2z" fill="#444"/><path d="M52.5 47v1.3l3.6 2v-1.3zM59.3 47.2v1.3l-3.2 1.8v-1.3z" fill="#333"/><rect x="50.3" y="45.5" width="0.8" height="3.5" fill="#d66"/>
<path d="M62.5 48.5l4-2.5l4.5 1.5l-4 2.5z" fill="#8a8ee0"/>
<ellipse cx="78" cy="46.5" rx="2.2" ry="1.7" fill="#18c818"/><ellipse cx="75.8" cy="49" rx="2" ry="1.5" fill="#1414c8"/><ellipse cx="80.3" cy="49.2" rx="1.8" ry="1.4" fill="#d08010"/>
<path d="M88 45.5l2.5 0l1 1.5l-1 1l1 1.2l-1.5 1.3h-2l-1-1.5l1-1l-1-1z" fill="#6e5f5f"/>
<path d="M3.5 67.5l3.5-2v7l-3.5 2z" fill="#3a3fa0"/><path d="M6 68.5l5-1.5v6l-5 1.5z" fill="#3f7fe0"/>
<path d="M14.5 69.5h2.2l-1.1 1.3z" fill="#111"/>
<ellipse cx="22.5" cy="66.8" rx="3.8" ry="1.7" fill="#e0e0e0" stroke="#777" stroke-width="0.45"/><ellipse cx="22.5" cy="66.8" rx="2" ry="1" fill="#4f6fc8"/>
<ellipse cx="33.5" cy="66.8" rx="3.8" ry="1.7" fill="#e0e0e0" stroke="#777" stroke-width="0.45"/><ellipse cx="33.5" cy="66.8" rx="2" ry="1" fill="#4f6fc8"/>
<ellipse cx="44.5" cy="66.8" rx="3.8" ry="1.7" fill="#e0e0e0" stroke="#777" stroke-width="0.45"/><ellipse cx="44.5" cy="66.8" rx="2" ry="1" fill="#4f6fc8"/>
<g fill="#6f8fdf" stroke="#999" stroke-width="0.3"><rect x="24.5" y="69" width="2" height="2"/><rect x="24.5" y="72" width="2" height="2"/></g>
<g fill="#fff" stroke="#999" stroke-width="0.3"><rect x="35.5" y="69.5" width="2" height="2"/><circle cx="36.5" cy="73" r="1"/></g>
<g stroke="#999" stroke-width="0.3"><rect x="46.5" y="69.5" width="2" height="2" fill="#6f8fdf"/><circle cx="48" cy="73" r="1.2" fill="#fff"/></g>
<path d="M95.5 70l3.8-2.4l3.8 2.4l-3.8 2.4z" fill="#1620d0"/><ellipse cx="99.3" cy="69.7" rx="1.5" ry="0.7" fill="#8b9bf0"/><path d="M105 69.5h2.2l-1.1 1.3z" fill="#111"/>
<path d="M109.5 68l3.5-2v7l-3.5 2z" fill="#3a3fa0"/><path d="M112 69l5-1.5v6l-5 1.5z" fill="#3f7fe0"/><path d="M120 69.5h2.2l-1.1 1.3z" fill="#111"/>
<path d="M127.5 66v6.5l1.5-1.5l1.2 2.3l0.9-0.4l-1.2-2.3h2.2z" fill="#fff" stroke="#333" stroke-width="0.4"/>
<rect x="137" y="69.2" width="8" height="4" fill="#f5ee60" stroke="#9ee0f0" stroke-width="0.6"/><path d="M141.5 66.3l1.8 1.8v1.5" stroke="#555" stroke-width="0.5" fill="none"/>
<path d="M148.2 68q4.3-4 8.6 0q-4.3 3-8.6 0z" fill="#e8e8e8" stroke="#666" stroke-width="0.45"/><circle cx="152.5" cy="67.6" r="1.6" fill="#5a7ad0"/><circle cx="152.5" cy="67.6" r="0.6" fill="#223"/>
<path d="M159.2 68q4.3-4 8.6 0q-4.3 3-8.6 0z" fill="#e8e8e8" stroke="#666" stroke-width="0.45"/><circle cx="163.5" cy="67.6" r="1.6" fill="#5a7ad0"/><circle cx="163.5" cy="67.6" r="0.6" fill="#223"/>
<rect x="1.8499999999999999" y="20.15" width="0.9" height="0.9" fill="#666"/>
<rect x="1.8499999999999999" y="22.75" width="0.9" height="0.9" fill="#666"/>
<rect x="1.8499999999999999" y="25.35" width="0.9" height="0.9" fill="#666"/>
<rect x="1.8499999999999999" y="27.95" width="0.9" height="0.9" fill="#666"/>
<rect x="39.05" y="20.15" width="0.9" height="0.9" fill="#666"/>
<rect x="39.05" y="22.75" width="0.9" height="0.9" fill="#666"/>
<rect x="39.05" y="25.35" width="0.9" height="0.9" fill="#666"/>
<rect x="39.05" y="27.95" width="0.9" height="0.9" fill="#666"/>
<rect x="171.05" y="20.15" width="0.9" height="0.9" fill="#666"/>
<rect x="171.05" y="22.75" width="0.9" height="0.9" fill="#666"/>
<rect x="171.05" y="25.35" width="0.9" height="0.9" fill="#666"/>
<rect x="171.05" y="27.95" width="0.9" height="0.9" fill="#666"/>
<rect x="250.85000000000002" y="20.15" width="0.9" height="0.9" fill="#666"/>
<rect x="250.85000000000002" y="22.75" width="0.9" height="0.9" fill="#666"/>
<rect x="250.85000000000002" y="25.35" width="0.9" height="0.9" fill="#666"/>
<rect x="250.85000000000002" y="27.95" width="0.9" height="0.9" fill="#666"/>
<rect x="388.55" y="20.15" width="0.9" height="0.9" fill="#666"/>
<rect x="388.55" y="22.75" width="0.9" height="0.9" fill="#666"/>
<rect x="388.55" y="25.35" width="0.9" height="0.9" fill="#666"/>
<rect x="388.55" y="27.95" width="0.9" height="0.9" fill="#666"/>
<rect x="475.55" y="20.15" width="0.9" height="0.9" fill="#666"/>
<rect x="475.55" y="22.75" width="0.9" height="0.9" fill="#666"/>
<rect x="475.55" y="25.35" width="0.9" height="0.9" fill="#666"/>
<rect x="475.55" y="27.95" width="0.9" height="0.9" fill="#666"/>
<rect x="558.05" y="20.15" width="0.9" height="0.9" fill="#666"/>
<rect x="558.05" y="22.75" width="0.9" height="0.9" fill="#666"/>
<rect x="558.05" y="25.35" width="0.9" height="0.9" fill="#666"/>
<rect x="558.05" y="27.95" width="0.9" height="0.9" fill="#666"/>
<path d="M14.8 25.8Q13 20.8 8.8 23.6" stroke="#6e74c6" stroke-width="1.9" fill="none"/><path d="M5.8 23.2l4.8 0.2l-2.8 4.2z" fill="#6e74c6"/>
<path d="M17 24.0h2l-1 1.1z" fill="#222"/>
<path d="M22.2 25.8Q24 20.8 28.2 23.6" stroke="#dcdde9" stroke-width="1.9" fill="none"/><path d="M31.2 23.2l-4.8 0.2l2.8 4.2z" fill="#dcdde9"/>
<rect x="33" y="24.3" width="1.5" height="0.5" fill="#bbb"/>
<rect x="43.5" y="21" width="6" height="7.5" fill="#f4f4f4" stroke="#c8c8c8" stroke-width="0.3"/><path d="M44.5 19.5l1.8 1.3l-1.8 1.4l-1.8-1.4z" fill="#40b820"/>
<path d="M47.5 24.3l2 1.2l-2 1.2l-2-1.2z" fill="#20c020"/><path d="M45.8 26.1l1.9 1.1l-1.9 1.2l-1.9-1.2z" fill="#1530d8"/><path d="M49.3 26.1l1.9 1.1l-1.9 1.2l-1.9-1.2z" fill="#d88a18"/>
<path d="M54.3 24.0h2l-1 1.1z" fill="#222"/>
<path d="M59 21h3l1 1h4.5v6.5h-8.5z" fill="url(#fold)"/><path d="M60.5 23.5l8-1.5v6.5h-8z" fill="#f8dc8c" opacity="0.8"/>
<path d="M64.0 24.3l2 1.2l-2 1.2l-2-1.2z" fill="#20c020"/><path d="M62.3 26.1l1.9 1.1l-1.9 1.2l-1.9-1.2z" fill="#1530d8"/><path d="M65.8 26.1l1.9 1.1l-1.9 1.2l-1.9-1.2z" fill="#d88a18"/>
<path d="M69.9 24.0h2l-1 1.1z" fill="#222"/>
<rect x="75" y="19.8" width="6.5" height="7.5" fill="#5658a8"/><rect x="76" y="20.5" width="4.5" height="2" fill="#e8e8f4"/><rect x="76.3" y="23.5" width="4" height="3" fill="#9aa0d8"/>
<path d="M80.0 24.5l2 1.2l-2 1.2l-2-1.2z" fill="#20c020"/><path d="M78.3 26.3l1.9 1.1l-1.9 1.2l-1.9-1.2z" fill="#1530d8"/><path d="M81.8 26.3l1.9 1.1l-1.9 1.2l-1.9-1.2z" fill="#d88a18"/>
<path d="M85.9 24.0h2l-1 1.1z" fill="#222"/>
<path d="M90.5 22.5l2 1.5l3.5-3.5l1.2 1l-4.7 4.5l-3.2-2.5z" fill="#38c028"/><path d="M95 24.5l4.5-1.2v5l-4.5 1.2z" fill="#4a4f98"/>
<path d="M101.5 24.0h2l-1 1.1z" fill="#222"/>
<path d="M106 23.8l4.8-3l-0.9-1.3l4.3-0.2l-1.5 3.8l-0.8-1.1l-4.8 3z" fill="#e81818"/><path d="M110 25l5-1.5v5l-5 1.5z" fill="#4a4f98"/>
<path d="M117.5 24.0h2l-1 1.1z" fill="#222"/>
<path d="M122 23.8l4.8-3l-0.9-1.3l4.3-0.2l-1.5 3.8l-0.8-1.1l-4.8 3z" fill="#e81818"/>
<path d="M133.5 24.0h2l-1 1.1z" fill="#222"/>
<circle cx="146.5" cy="21.8" r="2" fill="#c88850"/><path d="M145 20.5q1.5-1.5 3 0v-0.8q-1.5-1-3 0z" fill="#6b3f1f"/><path d="M143 29q0-4 3.5-4t3.5 4z" fill="#1f9f2f"/>
<path d="M154 21h3.5l1 1h4.5v6.5h-9z" fill="url(#fold)"/>
<rect x="157.5" y="24.3" width="1.5" height="4.5" fill="#1010c8"/><rect x="159" y="24" width="1.5" height="4.5" fill="#10a010"/><rect x="160.5" y="23.7" width="1.5" height="4.5" fill="#20d020"/><rect x="162" y="23.4" width="1.2" height="4.5" fill="#e02020"/>
<path d="M165 24.0h2l-1 1.1z" fill="#222"/>
<rect x="175.5" y="20.5" width="8.5" height="8.5" fill="#eaeaea" stroke="#d2d4dc" stroke-width="0.4"/><path d="M176.5 22.5h4M178.5 20.5v4" stroke="#b8d8a8" stroke-width="1.2"/>
<rect x="187.5" y="20.5" width="8.5" height="8.5" fill="#eaeaea" stroke="#d2d4dc" stroke-width="0.4"/><path d="M188.5 21l3.5 3M192 21l-3.5 3" stroke="#f0b8b8" stroke-width="1"/>
<rect x="197.5" y="20.5" width="8.5" height="8" fill="#fff" stroke="#4c4f98" stroke-width="0.8"/>
<path d="M209.5 24.0h2l-1 1.1z" fill="#222"/>
<rect x="214.5" y="20.5" width="8" height="8.5" fill="#e4e5ec" stroke="#d6d8e2" stroke-width="0.4"/><rect x="226" y="20.5" width="8" height="8.5" fill="#e4e5ec" stroke="#d6d8e2" stroke-width="0.4"/>
<rect x="237.5" y="20.5" width="8.5" height="8.5" fill="#fff" stroke="#4c4f98" stroke-width="0.8"/><path d="M239 24.5q2-4 4-2l-2 2z" fill="#444"/><rect x="238.5" y="26" width="2.5" height="2" fill="#3a3d80"/><rect x="242" y="26" width="3" height="2" fill="#3a3d80"/>
<circle cx="257.8" cy="23.2" r="2.6" fill="#b8bcd0" stroke="#6d7090" stroke-width="0.5"/><path d="M259.7 25.2l2.5 2.7" stroke="#6d70b8" stroke-width="0.9"/>
<path d="M267 24.2l3.5-3.5v2h4v3h-4v2z" fill="#8f93dd"/>
<path d="M279 28V20.5" stroke="#20c020" stroke-width="0.9"/><path d="M279 27.5H286" stroke="#e03030" stroke-width="0.7"/>
<path d="M290.5 28V20.3" stroke="#20c020" stroke-width="0.9"/><path d="M290.5 20.3H298.5" stroke="#e03030" stroke-width="0.7"/>
<path d="M302.5 28V20.5" stroke="#3040e0" stroke-width="0.9"/><path d="M301.5 21.5l1-1.5l1 1.5z" fill="#3040e0"/>
<path d="M302.5 27.3H310" stroke="#e04040" stroke-width="0.8"/>
<path d="M320.5 28V20.5" stroke="#3040e0" stroke-width="0.9"/><path d="M319.5 21.5l1-1.5l1 1.5z" fill="#3040e0"/>
<path d="M313 27.3H320.5" stroke="#e04040" stroke-width="0.8"/>
<path d="M325.5 28V20.5" stroke="#3040e0" stroke-width="0.9"/><path d="M324.5 21.5l1-1.5l1 1.5z" fill="#3040e0"/>
<path d="M325.5 27.3H333" stroke="#20c020" stroke-width="0.8"/>
<path d="M344.5 28V20.5" stroke="#3040e0" stroke-width="0.9"/><path d="M343.5 21.5l1-1.5l1 1.5z" fill="#3040e0"/>
<path d="M336.5 27.3H344.5" stroke="#20c020" stroke-width="0.8"/>
<path d="M352.5 28.5V20.5" stroke="#3040e0" stroke-width="0.8"/><path d="M352.5 28.5l-3.5-1.5" stroke="#20c020" stroke-width="0.8"/><path d="M352.5 28.5l4-2" stroke="#e03030" stroke-width="0.8"/>
<path d="M360 20l8 1.5v6l-8-1.5z" fill="#3668c8" stroke="#333" stroke-width="0.4"/><path d="M364 26.5l1.5 1.2l3-2.5" stroke="#e81818" stroke-width="1" fill="none"/>
<rect x="371.5" y="20" width="8.5" height="8.5" fill="#d8e4f0"/><circle cx="375.5" cy="23" r="1.5" fill="#e8d8c0"/><path d="M373 28.5q0-3 2.5-3t2.5 3z" fill="#b8e0b8"/>
<rect x="383" y="24.3" width="1.2" height="0.4" fill="#999"/>
<circle cx="397.5" cy="23.3" r="3" fill="#d8d8f8" stroke="#808090" stroke-width="0.6"/><path d="M395.5 25.8l-2 2" stroke="#333" stroke-width="1"/>
<ellipse cx="408" cy="23.8" rx="4" ry="3" fill="none" stroke="#b0b0b0" stroke-width="0.4"/><circle cx="408.5" cy="23.5" r="2" fill="#d8d8f8" stroke="#8888a0" stroke-width="0.5"/><path d="M410 25.3l2 2.3" stroke="#6d70b8" stroke-width="0.8"/>
<path d="M420 20v8.5M416.5 24.3h7" stroke="#5a5fb0" stroke-width="0.7"/><path d="M416 24.3l1.5-1v2z" fill="#5a5fb0"/>
<path d="M428.5 24v-2.5q0-0.8 0.8-0.8l0.5 2.3v-3q0-0.7 0.8-0.7l0.5 2.5v-2.6q0-0.7 0.8-0.7t0.8 0.7l0.2 2.8l0.5-2q0.8-0.2 0.8 0.5v4q0 3.5-3 3.5t-3.7-3.5z" fill="#fff" stroke="#777" stroke-width="0.4"/>
<path d="M439.5 24.3l2-1.8v3.6zM448 24.3l-2.5-2v4z" fill="#5a5fb0"/><rect x="441" y="23.6" width="5" height="1.4" fill="#8f93dd"/>
<path d="M455 20l-2 2.5h4zM455 28.5l-2-2.5h4z" fill="#5a5fb0"/><rect x="454.3" y="22" width="1.4" height="4.5" fill="#8f93dd"/>
<path d="M465.5 20.5q-3 3.8 0 7.6" stroke="#6a6fc0" stroke-width="1.3" fill="none"/><path d="M468.5 20.5q3 3.8 0 7.6" stroke="#6a6fc0" stroke-width="1.3" fill="none"/>
<rect x="481.2" y="19.8" width="5" height="4" rx="1" fill="#8e90c8"/><circle cx="486.5" cy="22.5" r="2" fill="#5456a0"/><circle cx="486.5" cy="22.5" r="0.7" fill="#dde"/>
<rect x="480" y="24.5" width="4" height="4" fill="#3a3d88"/><rect x="481" y="25.5" width="2" height="1" fill="#ddd"/>
<rect x="492.7" y="19.8" width="5" height="4" rx="1" fill="#8e90c8"/><circle cx="498.0" cy="22.5" r="2" fill="#5456a0"/><circle cx="498.0" cy="22.5" r="0.7" fill="#dde"/>
<rect x="491.5" y="24.5" width="7.5" height="4" fill="#e0e2ee" stroke="#555" stroke-width="0.5"/>
<rect x="504.2" y="19.8" width="5" height="4" rx="1" fill="#8e90c8"/><circle cx="509.5" cy="22.5" r="2" fill="#5456a0"/><circle cx="509.5" cy="22.5" r="0.7" fill="#dde"/>
<rect x="503" y="26.5" width="6" height="2" fill="#fff" stroke="#444" stroke-width="0.5"/>
<rect x="515.7" y="19.8" width="5" height="4" rx="1" fill="#8e90c8"/><circle cx="521.0" cy="22.5" r="2" fill="#5456a0"/><circle cx="521.0" cy="22.5" r="0.7" fill="#dde"/>
<rect x="514.5" y="25" width="7" height="3.5" fill="#fff" stroke="#555" stroke-width="0.4"/>
<rect x="527.2" y="19.8" width="5" height="4" rx="1" fill="#8e90c8"/><circle cx="532.5" cy="22.5" r="2" fill="#5456a0"/><circle cx="532.5" cy="22.5" r="0.7" fill="#dde"/>
<rect x="526" y="25" width="7" height="3.5" fill="#6a88d8" stroke="#555" stroke-width="0.5"/>
<rect x="539.2" y="19.8" width="5" height="4" rx="1" fill="#8e90c8"/><circle cx="544.5" cy="22.5" r="2" fill="#5456a0"/><circle cx="544.5" cy="22.5" r="0.7" fill="#dde"/>
<rect x="538" y="24.5" width="7" height="4" fill="#dde0ee" stroke="#555" stroke-width="0.5"/>
<rect x="551.2" y="19.8" width="5" height="4" rx="1" fill="#8e90c8"/><circle cx="556.5" cy="22.5" r="2" fill="#5456a0"/><circle cx="556.5" cy="22.5" r="0.7" fill="#dde"/>
<rect x="550" y="24.5" width="7" height="4" fill="#dde0ee" stroke="#555" stroke-width="0.5"/>
<path d="M562 20l2.5 4M566 20l-2.5 4" stroke="#999" stroke-width="0.5"/><circle cx="562.5" cy="25.5" r="1" fill="#6a70c0"/><rect x="564.5" y="24.5" width="3.5" height="3.5" fill="#555"/><rect x="565.5" y="25.5" width="1.5" height="1.5" fill="#fff"/>
<path d="M579 20.5h3l1.5 1.5v4h-4.5z" fill="#fff" stroke="#999" stroke-width="0.4"/><path d="M580.5 22h3l1.5 1.5v4h-4.5z" fill="#fff" stroke="#999" stroke-width="0.4"/><rect x="583" y="25" width="3.5" height="3.5" fill="#555"/><rect x="584" y="26" width="1.5" height="1.2" fill="#fff"/>
<path d="M589 24.0h2l-1 1.1z" fill="#222"/>
<rect x="594.5" y="21" width="4.5" height="5.5" fill="#eceef4" stroke="#d4d6e0" stroke-width="0.4"/><rect x="597.5" y="24.5" width="4.5" height="4" fill="#f4f4f8" stroke="#d4d6e0" stroke-width="0.4"/>
<path d="M605 24.0h2l-1 1.1z" fill="#bbb"/>
<rect x="611" y="21" width="5" height="5" fill="#d8d8dc"/><rect x="614" y="24" width="5" height="4.5" fill="#e8e8ec" stroke="#d0d0d4" stroke-width="0.4"/>
<path d="M621 24.0h2l-1 1.1z" fill="#bbb"/>
<path d="M746 24l3.8-3.6v2.2h4.8v2.8h-4.8v2.2z" fill="#bfe0f0"/><path d="M766.5 24l-3.8-3.6v2.2h-4.8v2.8h4.8v2.2z" fill="#bfe0f0"/>
<rect x="176.05" y="339.30" width="0.9" height="0.9" fill="#777"/>
<rect x="176.05" y="341.80" width="0.9" height="0.9" fill="#777"/>
<rect x="176.05" y="344.30" width="0.9" height="0.9" fill="#777"/>
<rect x="176.05" y="346.80" width="0.9" height="0.9" fill="#777"/>
<rect x="306.05" y="339.30" width="0.9" height="0.9" fill="#777"/>
<rect x="306.05" y="341.80" width="0.9" height="0.9" fill="#777"/>
<rect x="306.05" y="344.30" width="0.9" height="0.9" fill="#777"/>
<rect x="306.05" y="346.80" width="0.9" height="0.9" fill="#777"/>
<rect x="547.05" y="339.30" width="0.9" height="0.9" fill="#777"/>
<rect x="547.05" y="341.80" width="0.9" height="0.9" fill="#777"/>
<rect x="547.05" y="344.30" width="0.9" height="0.9" fill="#777"/>
<rect x="547.05" y="346.80" width="0.9" height="0.9" fill="#777"/>
<rect x="563.55" y="339.30" width="0.9" height="0.9" fill="#777"/>
<rect x="563.55" y="341.80" width="0.9" height="0.9" fill="#777"/>
<rect x="563.55" y="344.30" width="0.9" height="0.9" fill="#777"/>
<rect x="563.55" y="346.80" width="0.9" height="0.9" fill="#777"/>
<rect x="675.55" y="339.30" width="0.9" height="0.9" fill="#777"/>
<rect x="675.55" y="341.80" width="0.9" height="0.9" fill="#777"/>
<rect x="675.55" y="344.30" width="0.9" height="0.9" fill="#777"/>
<rect x="675.55" y="346.80" width="0.9" height="0.9" fill="#777"/>
<path d="M180 339h3l1 1h4v6h-8z" fill="url(#fold)"/>
<path d="M184.5 341.3l2.4 1.4l-2.4 1.5l-2.4-1.5z" fill="#20c020"/><path d="M182.5 343.8l2.4 1.4l-2.4 1.6l-2.4-1.6z" fill="#1530d8"/><path d="M186.8 343.8l2.3 1.3l-2.3 1.6l-2.3-1.6z" fill="#d88a18"/><path d="M180.1 345.2v0.8l2.4 1.6l2.4-1.6v-0.8l-2.4 1.6z" fill="#0a1a90"/><path d="M184.5 345.1v0.8l2.3 1.6l2.3-1.6v-0.8l-2.3 1.6z" fill="#9a5a08"/>
<path d="M192 339h3l1 1h4v6h-8z" fill="url(#fold)"/>
<path d="M192.5 344.5l4.5-2.4l4.5 2.4l-4.5 2.5z" fill="#2a3ae8"/><path d="M192.5 344.5v1l4.5 2.5l4.5-2.5v-1l-4.5 2.5z" fill="#0a1590"/>
<path d="M203.5 339h3l1 1h4v6h-8z" fill="url(#fold)"/>
<path d="M206.3 348.3v-3.8q0-1.8 1.8-1.8h3.2" stroke="#e02020" stroke-width="1.1" fill="none"/><rect x="208" y="344.6" width="2.4" height="3.6" fill="#fff" stroke="#555" stroke-width="0.4"/>
<path d="M215 339h3l1 1h4v6h-8z" fill="url(#fold)"/>
<path d="M216 344.5l4.2-2.2l4.3 2.2l-4.3 2.3z" fill="#666"/><path d="M216 344.5v1.4l4.2 2.3l4.3-2.3v-1.4l-4.3 2.3z" fill="#333"/><rect x="214.8" y="342" width="0.9" height="3.5" fill="#e04040"/>
<path d="M226.5 339h3l1 1h4v6h-8z" fill="url(#fold)"/>
<rect x="228.6" y="339.3" width="1.4" height="6" fill="#e02020"/><circle cx="229.3" cy="345.8" r="1.2" fill="#e02020"/><rect x="231" y="345" width="3.3" height="3.3" fill="#22aa22"/><rect x="228.4" y="347.2" width="1.7" height="1.5" fill="#222"/>
<path d="M238 339h3l1 1h4v6h-8z" fill="url(#fold)"/>
<path d="M241.5 341v4l-3.2 2.2M241.5 345l3.5 1.2" stroke="#4050c0" stroke-width="0.7" fill="none"/><rect x="244.8" y="345" width="3.3" height="3.3" fill="#22aa22"/>
<path d="M249.5 343h2l-1 1.1z" fill="#222"/>
<path d="M260 340.5l6.3 6.3M266.3 340.5l-6.3 6.3" stroke="#e82020" stroke-width="2"/>
<ellipse cx="274.5" cy="343.5" rx="4" ry="3.2" fill="#999"/><ellipse cx="273.5" cy="342.5" rx="3" ry="2" fill="#bbb"/>
<path d="M281.5 339h3l1 1h4v6h-8z" fill="url(#fold)"/>
<path d="M283 345.5l3-1.5l-0.5 3z" fill="#e02020"/><path d="M284 345.8q3 0 5-2" stroke="#e02020" stroke-width="0.7" fill="none"/>
<path d="M297.5 339.5v8" stroke="#555" stroke-width="0.5"/><path d="M294.5 342l2-1M298.5 341l2 1" stroke="#e02020" stroke-width="0.8"/><path d="M296.5 346h2" stroke="#333" stroke-width="0.6"/>
<path d="M309.5 344q1-3.5 4.5-3.5l2 1l-1 2.5z" fill="#6a70c8"/><rect x="309.5" y="345.5" width="6.5" height="1.2" fill="url(#rainb)"/>
<defs><linearGradient id="rainb"><stop offset="0" stop-color="#d02020"/><stop offset="0.3" stop-color="#e0c020"/><stop offset="0.55" stop-color="#20c020"/><stop offset="0.8" stop-color="#2040e0"/><stop offset="1" stop-color="#c020c0"/></linearGradient></defs>
<path d="M345.5 343h2l-1 1.1z" fill="#222"/>
<path d="M352 342.5l3-2.5l3.5 1l1.5 2.5l-2.5 2l-3-1z" fill="#fff" stroke="#555" stroke-width="0.45"/>
<path d="M363 343h2l-1 1.1z" fill="#222"/>
<path d="M367 343q3-3 7-2l4 3l-1 1q-3-2-5-1.5z" fill="#6a70b8"/>
<path d="M379 343h2l-1 1.1z" fill="#222"/>
<path d="M387.8 339.5l4 1.8v4.2l-4 2l-4-2v-4.2z" fill="#7c7fc0" stroke="#444" stroke-width="0.3"/><path d="M383.8 341.3l4 1.8l4-1.8M387.8 343.1v4.4" stroke="#ddd" stroke-width="0.35" fill="none"/>
<path d="M401.5 338.8l3.5 1.6v3.6l-3.5 1.6l-3.5-1.6v-3.6z" fill="#4a4e98"/><rect x="398.2" y="346" width="6.5" height="1.2" fill="url(#rainb)"/>
<path d="M437 343h2l-1 1.1z" fill="#222"/>
<circle cx="447.8" cy="343.5" r="3.8" fill="#f4f4f4" stroke="#777" stroke-width="0.4"/><path d="M444 343.5h7.6M447.8 339.7v7.6M445.2 341h5.2M445.2 346h5.2M445.5 341v5M450.2 341v5" stroke="#888" stroke-width="0.3"/>
<path d="M454 343h2l-1 1.1z" fill="#222"/>
<path d="M463 339l4 1.8v4.6l-4 2l-4-2v-4.6z" fill="#4a4e90"/><path d="M459 340.8l4 1.8l4-1.8M463 342.6v4.8" stroke="#8a8ec8" stroke-width="0.35" fill="none"/>
<path d="M470 343h2l-1 1.1z" fill="#222"/>
<path d="M476.5 346l5.5-3.5" stroke="#666" stroke-width="0.6"/>
<path d="M485.5 343h2l-1 1.1z" fill="#222"/>
<path d="M490 343.5l4.5-2.5l4.5 2.5l-4.5 2.5z" fill="#777"/><path d="M491.5 343.5l3-1.5l3 1.5" stroke="#bbb" stroke-width="0.3" fill="none"/>
<path d="M501.5 343h2l-1 1.1z" fill="#222"/>
<path d="M506 343l4.3-2.5l4.3 2.5l-4.3 2.5z" fill="#8a8ef0" stroke="#2a2ed0" stroke-width="0.5"/><path d="M506 343v1.5l4.3 2.5l4.3-2.5v-1.5" fill="#2a2ed0"/>
<path d="M517 343h2l-1 1.1z" fill="#222"/>
<g fill="#4c50a8"><rect x="523.5" y="344.5" width="2" height="2"/><rect x="526.5" y="343.5" width="2" height="2"/><rect x="527.5" y="340.5" width="2" height="2"/><rect x="524.5" y="341.5" width="2" height="2"/></g>
<rect x="534" y="339.5" width="8" height="6" fill="#3a78d8" stroke="#333" stroke-width="0.4"/><path d="M537 346.5h2l0.8 1.5h-3.6z" fill="#222"/>
<path d="M555.5 339l1.2 2.8l3 0.2l-2.3 2l0.8 3l-2.7-1.6l-2.7 1.6l0.8-3l-2.3-2l3-0.2z" fill="#f4c010" stroke="#c89000" stroke-width="0.3"/>
<g stroke="#4c50a8" stroke-width="0.45" fill="#7c80c8"><path d="M568.5 340.5l3-0.8v6.5l-3 0.8z"/><path d="M568.5 342.6l3-0.8M568.5 344.6l3-0.8"/></g>
<path d="M579.5 343h2l-1 1.1z" fill="#222"/>
<path d="M585 347l7-6" stroke="#999" stroke-width="1.6"/><circle cx="585.5" cy="346.5" r="1.2" fill="#bbb"/><circle cx="591.8" cy="341" r="1.2" fill="#bbb"/>
<path d="M600 343.5l3.5-3.5v2h2.5v3h-2.5v2z" fill="#6a6fb8"/><path d="M617 343.5l-3.5-3.5v2h-2.5v3h2.5v2z" fill="#6a6fb8"/>
<path d="M624 345q0-4 7-3l-0.3 1.2q-4-0.8-5.5 2z" fill="#8f93cc"/><path d="M623 343l2.8 0.3l-1.4 2.5z" fill="#8f93cc"/>
<path d="M664 345q0-4 7-3l-0.3 1.2q-4-0.8-5.5 2z" fill="#8f93cc"/><path d="M663 343l2.8 0.3l-1.4 2.5z" fill="#8f93cc"/>
<path d="M681 340.5l3 2.5l3-2.5M681 346.5l3-2.5l3 2.5" stroke="#5a8ad8" stroke-width="1" fill="none"/><path d="M681 340l0 7M688 340l0 7" stroke="#5a8ad8" stroke-width="0.6"/>
<path d="M690.5 343h2l-1 1.1z" fill="#222"/>
<rect x="177.00" y="41" width="0.9" height="0.9" fill="#777"/>
<rect x="179.50" y="41" width="0.9" height="0.9" fill="#777"/>
<rect x="182.00" y="41" width="0.9" height="0.9" fill="#777"/>
<rect x="184.50" y="41" width="0.9" height="0.9" fill="#777"/>
<defs><linearGradient id="vf" x1="0" y1="0" x2="1" y2="1"><stop offset="0" stop-color="#9a9ed8"/><stop offset="0.5" stop-color="#5a5fb0"/><stop offset="1" stop-color="#3a3f88"/></linearGradient></defs>
<path d="M177 47.5l7.5-2.5v6.5l-7.5 2.5z" fill="url(#vf)"/><path d="M184.5 45v6.5" stroke="#ddd" stroke-width="0.4"/>
<rect x="177.2" y="48" width="5" height="5" fill="#fff" stroke="#e05a4a" stroke-width="0.6"/>
<path d="M177 59.0l7.5-2.5v6.5l-7.5 2.5z" fill="url(#vf)"/><path d="M184.5 56.5v6.5" stroke="#ddd" stroke-width="0.4"/>
<path d="M180.5 62.5l2 1l2.5-2" stroke="#e81818" stroke-width="1" fill="none"/>
<path d="M177 70.5l7.5-2.5v6.5l-7.5 2.5z" fill="url(#vf)"/><path d="M184.5 68v6.5" stroke="#ddd" stroke-width="0.4"/>
<path d="M177 82.0l7.5-2.5v6.5l-7.5 2.5z" fill="url(#vf)"/><path d="M184.5 79.5v6.5" stroke="#ddd" stroke-width="0.4"/>
<path d="M177 94.0l7.5-2.5v6.5l-7.5 2.5z" fill="url(#vf)"/><path d="M184.5 91.5v6.5" stroke="#ddd" stroke-width="0.4"/>
<rect x="177" y="93.5" width="6" height="5" fill="none" stroke="#e05a4a" stroke-width="0.6"/>
<circle cx="181" cy="107" r="4" fill="#fff" stroke="#e05a4a" stroke-width="0.6"/><path d="M179 104.5l4-1v6l-4 1z" fill="#4a4f9a"/>
<ellipse cx="179" cy="119.5" rx="1.7" ry="1.5" fill="#2a3f9a"/><ellipse cx="183" cy="117.5" rx="1.7" ry="1.5" fill="#2a3f9a"/><path d="M178 117l3-2l1 2l-3 2z" fill="#333"/>
<circle cx="180.7" cy="128.6" r="1.6" fill="#2233aa"/><rect x="180.4" y="127.8" width="0.6" height="1.6" fill="#fff"/>
<path d="M177 145l8-3.5M177 145l5 0l3-2M185 138.5v3" stroke="#333" stroke-width="0.5" fill="none"/><path d="M177 140v5" stroke="#3a50c0" stroke-width="0.6"/>
<path d="M177 151l4-1v3.5l-4 1z" fill="#4a4f9a"/>
<rect x="177.2" y="161" width="1" height="3.5" fill="#d02020"/><rect x="177.2" y="164.8" width="1" height="1" fill="#222"/>
<path d="M177.5 175l2-1M177.5 176.5h6l1 2l-1 1h-6z" fill="#6a70c0"/><path d="M178.5 172.5l1 1.5" stroke="#e02020" stroke-width="1"/><path d="M184 180l1 1.5" stroke="#e02020" stroke-width="1"/>
<path d="M177.5 186l7-2v6.5l-7 2z" fill="#3a78d8" stroke="#222" stroke-width="0.4"/>
</svg>
</body></html>
